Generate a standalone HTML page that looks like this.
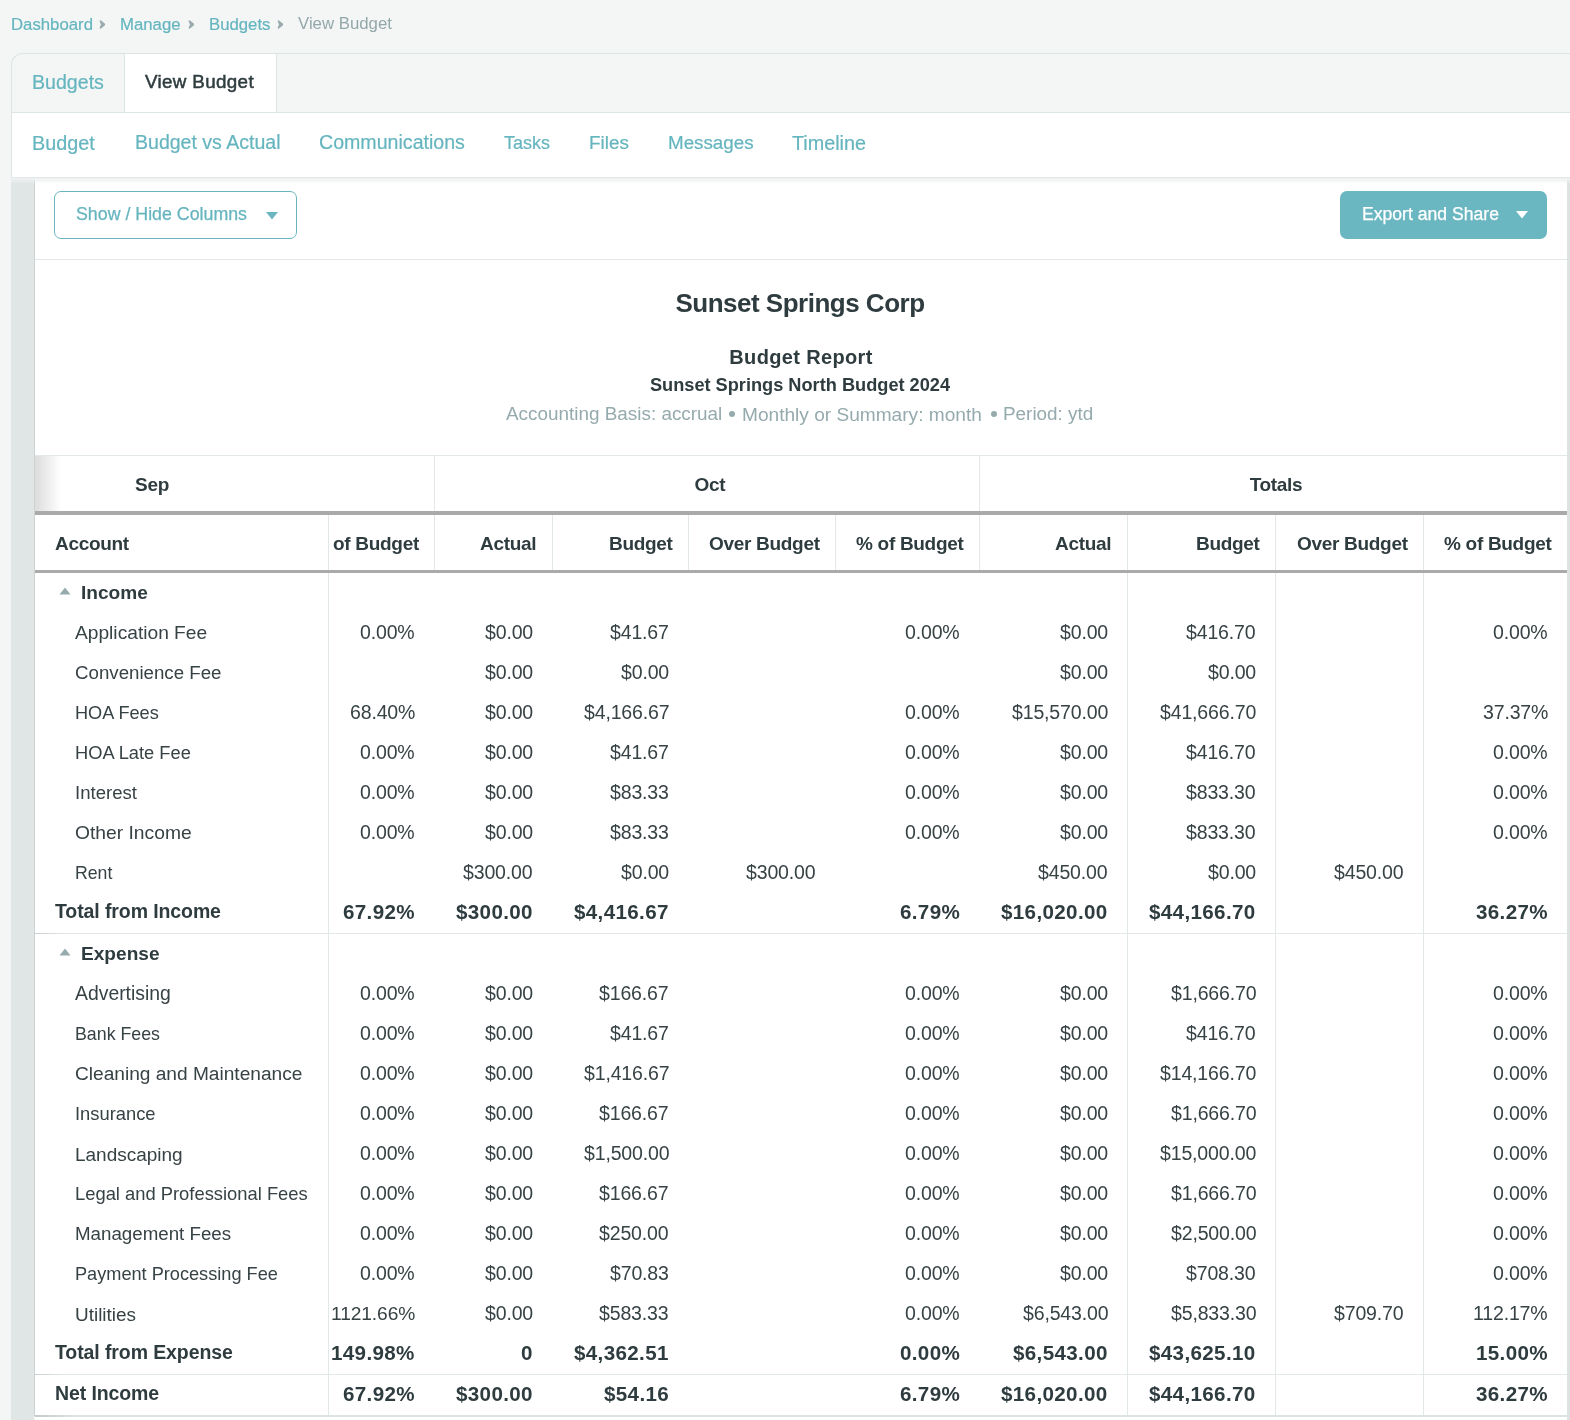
<!DOCTYPE html>
<html><head><meta charset="utf-8"><title>View Budget</title>
<style>
html,body{margin:0;padding:0;}
body{width:1570px;height:1420px;position:relative;overflow:hidden;background:#f4f6f6;font-family:"Liberation Sans",sans-serif;}
.t{position:absolute;white-space:nowrap;will-change:transform;}
.r{position:absolute;}
</style></head><body>
<div class="r" style="left:11px;top:178px;width:23px;height:1242px;background:#e0e6e6;"></div>
<div class="r" style="left:34px;top:178px;width:1px;height:1238px;background:#cdd3d3;"></div>
<div class="r" style="left:1567px;top:178px;width:3px;height:1242px;background:#dde3e3;"></div>
<div class="r" style="left:35px;top:178px;width:1532px;height:1242px;background:#fff;"></div>
<div class="r" style="left:11px;top:53px;width:1570px;height:125px;background:#f4f6f6;border-top:1px solid #dde4e4;border-left:1px solid #dde4e4;border-top-left-radius:12px;box-sizing:border-box;"></div>
<div class="r" style="left:124px;top:53px;width:153px;height:60px;background:#fff;border:1px solid #dde4e4;border-bottom:none;box-sizing:border-box;"></div>
<div class="r" style="left:11px;top:112px;width:1559px;height:1px;background:#dde4e4;"></div>
<div class="r" style="left:12px;top:113px;width:1558px;height:64px;background:#fff;"></div>
<div class="r" style="left:11px;top:177px;width:1559px;height:7px;background:linear-gradient(#dde2e2 0px,#eef1f1 1.5px,rgba(255,255,255,0) 7px);"></div>
<div class="t" style="left:11.30px;top:12.90px;font-size:16.75px;line-height:23px;color:#65b5bf;-webkit-text-stroke:0.2px #65b5bf;">Dashboard</div>
<div class="t" style="left:120.30px;top:12.90px;font-size:16.75px;line-height:23px;color:#65b5bf;-webkit-text-stroke:0.2px #65b5bf;">Manage</div>
<div class="t" style="left:209.00px;top:12.90px;font-size:16.75px;line-height:23px;color:#65b5bf;-webkit-text-stroke:0.2px #65b5bf;">Budgets</div>
<div class="t" style="left:297.50px;top:12.38px;font-size:16.8px;line-height:24px;color:#93a7a9;">View Budget</div>
<svg class="r" style="left:99px;top:19px" width="8" height="11" viewBox="0 0 8 11"><path d="M0.7 2.6 Q0.4 1.1 2.0 1.4 L5.8 4.5 Q6.5 5.5 5.8 6.5 L2.0 9.6 Q0.4 9.9 0.7 8.4 L2.0 5.5 Z" fill="#9aabad"/></svg>
<svg class="r" style="left:188px;top:19px" width="8" height="11" viewBox="0 0 8 11"><path d="M0.7 2.6 Q0.4 1.1 2.0 1.4 L5.8 4.5 Q6.5 5.5 5.8 6.5 L2.0 9.6 Q0.4 9.9 0.7 8.4 L2.0 5.5 Z" fill="#9aabad"/></svg>
<svg class="r" style="left:277px;top:19px" width="8" height="11" viewBox="0 0 8 11"><path d="M0.7 2.6 Q0.4 1.1 2.0 1.4 L5.8 4.5 Q6.5 5.5 5.8 6.5 L2.0 9.6 Q0.4 9.9 0.7 8.4 L2.0 5.5 Z" fill="#9aabad"/></svg>
<div class="t" style="left:31.50px;top:69.01px;font-size:19.6px;line-height:27px;color:#65b5bf;-webkit-text-stroke:0.2px #65b5bf;">Budgets</div>
<div class="t" style="left:145.30px;top:69.49px;font-size:18.8px;line-height:26px;color:#2f3c3f;-webkit-text-stroke:0.5px #2f3c3f;letter-spacing:0.35px;">View Budget</div>
<div class="t" style="left:31.90px;top:128.84px;font-size:19.8px;line-height:28px;color:#65b5bf;-webkit-text-stroke:0.2px #65b5bf;">Budget</div>
<div class="t" style="left:134.70px;top:129.43px;font-size:19.55px;line-height:27px;color:#65b5bf;-webkit-text-stroke:0.2px #65b5bf;">Budget vs Actual</div>
<div class="t" style="left:318.90px;top:129.41px;font-size:19.6px;line-height:27px;color:#65b5bf;-webkit-text-stroke:0.2px #65b5bf;">Communications</div>
<div class="t" style="left:504.40px;top:130.96px;font-size:18.0px;line-height:25px;color:#65b5bf;-webkit-text-stroke:0.2px #65b5bf;">Tasks</div>
<div class="t" style="left:588.60px;top:130.15px;font-size:18.9px;line-height:26px;color:#65b5bf;-webkit-text-stroke:0.2px #65b5bf;">Files</div>
<div class="t" style="left:667.70px;top:130.19px;font-size:18.8px;line-height:26px;color:#65b5bf;-webkit-text-stroke:0.2px #65b5bf;">Messages</div>
<div class="t" style="left:791.90px;top:128.84px;font-size:19.8px;line-height:28px;color:#65b5bf;-webkit-text-stroke:0.2px #65b5bf;">Timeline</div>
<div class="r" style="left:54px;top:191px;width:243px;height:48px;border:1px solid #6ab5bf;border-radius:7px;box-sizing:border-box;"></div>
<div class="t" style="left:75.80px;top:202.33px;font-size:17.8px;line-height:25px;color:#65b5bf;-webkit-text-stroke:0.25px #65b5bf;">Show / Hide Columns</div>
<svg class="r" style="left:266px;top:212px" width="12" height="8" viewBox="0 0 12 8"><path d="M0 0 H12 L6 7.5 Z" fill="#6ab5bf"/></svg>
<div class="r" style="left:1340px;top:191px;width:207px;height:48px;background:#6bb7c1;border-radius:7px;"></div>
<div class="t" style="left:1361.50px;top:202.40px;font-size:17.6px;line-height:25px;color:#fff;-webkit-text-stroke:0.25px #fff;">Export and Share</div>
<svg class="r" style="left:1516px;top:211px" width="12" height="8" viewBox="0 0 12 8"><path d="M0 0 H12 L6 7.5 Z" fill="#fff"/></svg>
<div class="r" style="left:35px;top:259px;width:1532px;height:1px;background:#e2e8e8;"></div>
<div class="t" style="left:500.30px;width:600px;text-align:center;top:285.49px;font-size:26px;line-height:36px;font-weight:bold;color:#2f3c3f;letter-spacing:-0.5px;">Sunset Springs Corp</div>
<div class="t" style="left:500.60px;width:600px;text-align:center;top:342.57px;font-size:20px;line-height:28px;font-weight:bold;color:#2f3c3f;letter-spacing:0.35px;">Budget Report</div>
<div class="t" style="left:500.00px;width:600px;text-align:center;top:373.19px;font-size:18.2px;line-height:25px;font-weight:bold;color:#2f3c3f;">Sunset Springs North Budget 2024</div>
<div class="t" style="left:505.80px;top:401.45px;font-size:18.9px;line-height:26px;color:#95aaad;">Accounting Basis: accrual</div>
<div class="t" style="left:742.00px;top:400.88px;font-size:19.1px;line-height:27px;color:#95aaad;">Monthly or Summary: month</div>
<div class="t" style="left:1003.20px;top:401.45px;font-size:18.9px;line-height:26px;color:#95aaad;">Period: ytd</div>
<div class="r" style="left:728.8px;top:411.1px;width:6px;height:6px;background:#95aaad;border-radius:50%;"></div>
<div class="r" style="left:990.8px;top:411.1px;width:6px;height:6px;background:#95aaad;border-radius:50%;"></div>
<div class="r" style="left:35px;top:455px;width:1532px;height:1px;background:#e2e8e8;"></div>
<div class="r" style="left:35px;top:456px;width:26px;height:55px;background:linear-gradient(90deg,#dcdcdc,rgba(255,255,255,0));"></div>
<div class="r" style="left:35px;top:511px;width:1532px;height:4px;background:#aaaaaa;"></div>
<div class="r" style="left:35px;top:570px;width:1532px;height:3px;background:#aaaaaa;"></div>
<div class="r" style="left:434px;top:456px;width:1px;height:55px;background:#e2e8e8;"></div>
<div class="r" style="left:979px;top:456px;width:1px;height:55px;background:#e2e8e8;"></div>
<div class="r" style="left:328px;top:515px;width:1px;height:55px;background:#e2e8e8;"></div>
<div class="r" style="left:434px;top:515px;width:1px;height:55px;background:#e2e8e8;"></div>
<div class="r" style="left:552px;top:515px;width:1px;height:55px;background:#e2e8e8;"></div>
<div class="r" style="left:688px;top:515px;width:1px;height:55px;background:#e2e8e8;"></div>
<div class="r" style="left:835px;top:515px;width:1px;height:55px;background:#e2e8e8;"></div>
<div class="r" style="left:979px;top:515px;width:1px;height:55px;background:#e2e8e8;"></div>
<div class="r" style="left:1127px;top:515px;width:1px;height:55px;background:#e2e8e8;"></div>
<div class="r" style="left:1275px;top:515px;width:1px;height:55px;background:#e2e8e8;"></div>
<div class="r" style="left:1423px;top:515px;width:1px;height:55px;background:#e2e8e8;"></div>
<div class="r" style="left:328px;top:573px;width:1px;height:842px;background:#e2e8e8;"></div>
<div class="r" style="left:1127px;top:573px;width:1px;height:842px;background:#e2e8e8;"></div>
<div class="r" style="left:1275px;top:573px;width:1px;height:842px;background:#e2e8e8;"></div>
<div class="r" style="left:1423px;top:573px;width:1px;height:842px;background:#e2e8e8;"></div>
<div class="r" style="left:35px;top:933px;width:1532px;height:1px;background:linear-gradient(90deg,#c9cfcf,#e2e8e8 30px);"></div>
<div class="r" style="left:35px;top:1374px;width:1532px;height:1px;background:linear-gradient(90deg,#c9cfcf,#e2e8e8 30px);"></div>
<div class="r" style="left:35px;top:1415px;width:1532px;height:2px;background:linear-gradient(90deg,#c4caca,#dde3e3 40px);"></div>
<div class="t" style="left:-148.00px;width:600px;text-align:center;top:470.72px;font-size:19px;line-height:27px;font-weight:bold;color:#2f3c3f;letter-spacing:-0.3px;">Sep</div>
<div class="t" style="left:409.90px;width:600px;text-align:center;top:470.72px;font-size:19px;line-height:27px;font-weight:bold;color:#2f3c3f;letter-spacing:-0.3px;">Oct</div>
<div class="t" style="left:976.00px;width:600px;text-align:center;top:470.72px;font-size:19px;line-height:27px;font-weight:bold;color:#2f3c3f;letter-spacing:-0.3px;">Totals</div>
<div class="t" style="left:55.00px;top:529.72px;font-size:19px;line-height:27px;font-weight:bold;color:#2f3c3f;letter-spacing:-0.3px;">Account</div>
<div class="t" style="right:1151.40px;text-align:right;top:529.72px;font-size:19px;line-height:27px;font-weight:bold;color:#2f3c3f;letter-spacing:-0.3px;">of Budget</div>
<div class="t" style="right:1033.40px;text-align:right;top:529.72px;font-size:19px;line-height:27px;font-weight:bold;color:#2f3c3f;letter-spacing:-0.3px;">Actual</div>
<div class="t" style="right:897.40px;text-align:right;top:529.72px;font-size:19px;line-height:27px;font-weight:bold;color:#2f3c3f;letter-spacing:-0.3px;">Budget</div>
<div class="t" style="right:750.40px;text-align:right;top:529.72px;font-size:19px;line-height:27px;font-weight:bold;color:#2f3c3f;letter-spacing:-0.3px;">Over Budget</div>
<div class="t" style="right:606.40px;text-align:right;top:529.72px;font-size:19px;line-height:27px;font-weight:bold;color:#2f3c3f;letter-spacing:-0.3px;">% of Budget</div>
<div class="t" style="right:458.40px;text-align:right;top:529.72px;font-size:19px;line-height:27px;font-weight:bold;color:#2f3c3f;letter-spacing:-0.3px;">Actual</div>
<div class="t" style="right:310.40px;text-align:right;top:529.72px;font-size:19px;line-height:27px;font-weight:bold;color:#2f3c3f;letter-spacing:-0.3px;">Budget</div>
<div class="t" style="right:162.40px;text-align:right;top:529.72px;font-size:19px;line-height:27px;font-weight:bold;color:#2f3c3f;letter-spacing:-0.3px;">Over Budget</div>
<div class="t" style="right:18.40px;text-align:right;top:529.72px;font-size:19px;line-height:27px;font-weight:bold;color:#2f3c3f;letter-spacing:-0.3px;">% of Budget</div>
<svg class="r" style="left:58.5px;top:587px" width="12" height="8" viewBox="0 0 12 8"><path d="M6 0.5 L11.5 7.5 H0.5 Z" fill="#97abad"/></svg>
<div class="t" style="left:81.10px;top:578.88px;font-size:19.1px;line-height:27px;font-weight:bold;color:#2f3c3f;">Income</div>
<div class="t" style="left:74.90px;top:619.45px;font-size:19.18px;line-height:27px;color:#374245;">Application Fee</div>
<div class="t" style="right:1155.10px;text-align:right;top:618.74px;font-size:19.5px;line-height:27px;color:#374245;letter-spacing:-0.15px;">0.00%</div>
<div class="t" style="right:1037.10px;text-align:right;top:618.74px;font-size:19.5px;line-height:27px;color:#374245;letter-spacing:-0.15px;">$0.00</div>
<div class="t" style="right:901.10px;text-align:right;top:618.74px;font-size:19.5px;line-height:27px;color:#374245;letter-spacing:-0.15px;">$41.67</div>
<div class="t" style="right:610.10px;text-align:right;top:618.74px;font-size:19.5px;line-height:27px;color:#374245;letter-spacing:-0.15px;">0.00%</div>
<div class="t" style="right:462.10px;text-align:right;top:618.74px;font-size:19.5px;line-height:27px;color:#374245;letter-spacing:-0.15px;">$0.00</div>
<div class="t" style="right:314.10px;text-align:right;top:618.74px;font-size:19.5px;line-height:27px;color:#374245;letter-spacing:-0.15px;">$416.70</div>
<div class="t" style="right:22.10px;text-align:right;top:618.74px;font-size:19.5px;line-height:27px;color:#374245;letter-spacing:-0.15px;">0.00%</div>
<div class="t" style="left:74.90px;top:660.12px;font-size:18.69px;line-height:26px;color:#374245;">Convenience Fee</div>
<div class="t" style="right:1037.10px;text-align:right;top:658.74px;font-size:19.5px;line-height:27px;color:#374245;letter-spacing:-0.15px;">$0.00</div>
<div class="t" style="right:901.10px;text-align:right;top:658.74px;font-size:19.5px;line-height:27px;color:#374245;letter-spacing:-0.15px;">$0.00</div>
<div class="t" style="right:462.10px;text-align:right;top:658.74px;font-size:19.5px;line-height:27px;color:#374245;letter-spacing:-0.15px;">$0.00</div>
<div class="t" style="right:314.10px;text-align:right;top:658.74px;font-size:19.5px;line-height:27px;color:#374245;letter-spacing:-0.15px;">$0.00</div>
<div class="t" style="left:74.90px;top:700.80px;font-size:18.17px;line-height:25px;color:#374245;">HOA Fees</div>
<div class="t" style="right:1155.10px;text-align:right;top:698.74px;font-size:19.5px;line-height:27px;color:#374245;letter-spacing:-0.15px;">68.40%</div>
<div class="t" style="right:1037.10px;text-align:right;top:698.74px;font-size:19.5px;line-height:27px;color:#374245;letter-spacing:-0.15px;">$0.00</div>
<div class="t" style="right:901.10px;text-align:right;top:698.74px;font-size:19.5px;line-height:27px;color:#374245;letter-spacing:-0.15px;">$4,166.67</div>
<div class="t" style="right:610.10px;text-align:right;top:698.74px;font-size:19.5px;line-height:27px;color:#374245;letter-spacing:-0.15px;">0.00%</div>
<div class="t" style="right:462.10px;text-align:right;top:698.74px;font-size:19.5px;line-height:27px;color:#374245;letter-spacing:-0.15px;">$15,570.00</div>
<div class="t" style="right:314.10px;text-align:right;top:698.74px;font-size:19.5px;line-height:27px;color:#374245;letter-spacing:-0.15px;">$41,666.70</div>
<div class="t" style="right:22.10px;text-align:right;top:698.74px;font-size:19.5px;line-height:27px;color:#374245;letter-spacing:-0.15px;">37.37%</div>
<div class="t" style="left:74.90px;top:740.26px;font-size:18.29px;line-height:26px;color:#374245;">HOA Late Fee</div>
<div class="t" style="right:1155.10px;text-align:right;top:738.74px;font-size:19.5px;line-height:27px;color:#374245;letter-spacing:-0.15px;">0.00%</div>
<div class="t" style="right:1037.10px;text-align:right;top:738.74px;font-size:19.5px;line-height:27px;color:#374245;letter-spacing:-0.15px;">$0.00</div>
<div class="t" style="right:901.10px;text-align:right;top:738.74px;font-size:19.5px;line-height:27px;color:#374245;letter-spacing:-0.15px;">$41.67</div>
<div class="t" style="right:610.10px;text-align:right;top:738.74px;font-size:19.5px;line-height:27px;color:#374245;letter-spacing:-0.15px;">0.00%</div>
<div class="t" style="right:462.10px;text-align:right;top:738.74px;font-size:19.5px;line-height:27px;color:#374245;letter-spacing:-0.15px;">$0.00</div>
<div class="t" style="right:314.10px;text-align:right;top:738.74px;font-size:19.5px;line-height:27px;color:#374245;letter-spacing:-0.15px;">$416.70</div>
<div class="t" style="right:22.10px;text-align:right;top:738.74px;font-size:19.5px;line-height:27px;color:#374245;letter-spacing:-0.15px;">0.00%</div>
<div class="t" style="left:74.90px;top:780.16px;font-size:18.59px;line-height:26px;color:#374245;">Interest</div>
<div class="t" style="right:1155.10px;text-align:right;top:778.74px;font-size:19.5px;line-height:27px;color:#374245;letter-spacing:-0.15px;">0.00%</div>
<div class="t" style="right:1037.10px;text-align:right;top:778.74px;font-size:19.5px;line-height:27px;color:#374245;letter-spacing:-0.15px;">$0.00</div>
<div class="t" style="right:901.10px;text-align:right;top:778.74px;font-size:19.5px;line-height:27px;color:#374245;letter-spacing:-0.15px;">$83.33</div>
<div class="t" style="right:610.10px;text-align:right;top:778.74px;font-size:19.5px;line-height:27px;color:#374245;letter-spacing:-0.15px;">0.00%</div>
<div class="t" style="right:462.10px;text-align:right;top:778.74px;font-size:19.5px;line-height:27px;color:#374245;letter-spacing:-0.15px;">$0.00</div>
<div class="t" style="right:314.10px;text-align:right;top:778.74px;font-size:19.5px;line-height:27px;color:#374245;letter-spacing:-0.15px;">$833.30</div>
<div class="t" style="right:22.10px;text-align:right;top:778.74px;font-size:19.5px;line-height:27px;color:#374245;letter-spacing:-0.15px;">0.00%</div>
<div class="t" style="left:74.90px;top:819.43px;font-size:19.25px;line-height:27px;color:#374245;">Other Income</div>
<div class="t" style="right:1155.10px;text-align:right;top:818.74px;font-size:19.5px;line-height:27px;color:#374245;letter-spacing:-0.15px;">0.00%</div>
<div class="t" style="right:1037.10px;text-align:right;top:818.74px;font-size:19.5px;line-height:27px;color:#374245;letter-spacing:-0.15px;">$0.00</div>
<div class="t" style="right:901.10px;text-align:right;top:818.74px;font-size:19.5px;line-height:27px;color:#374245;letter-spacing:-0.15px;">$83.33</div>
<div class="t" style="right:610.10px;text-align:right;top:818.74px;font-size:19.5px;line-height:27px;color:#374245;letter-spacing:-0.15px;">0.00%</div>
<div class="t" style="right:462.10px;text-align:right;top:818.74px;font-size:19.5px;line-height:27px;color:#374245;letter-spacing:-0.15px;">$0.00</div>
<div class="t" style="right:314.10px;text-align:right;top:818.74px;font-size:19.5px;line-height:27px;color:#374245;letter-spacing:-0.15px;">$833.30</div>
<div class="t" style="right:22.10px;text-align:right;top:818.74px;font-size:19.5px;line-height:27px;color:#374245;letter-spacing:-0.15px;">0.00%</div>
<div class="t" style="left:74.90px;top:860.97px;font-size:17.7px;line-height:25px;color:#374245;">Rent</div>
<div class="t" style="right:1037.10px;text-align:right;top:858.74px;font-size:19.5px;line-height:27px;color:#374245;letter-spacing:-0.15px;">$300.00</div>
<div class="t" style="right:901.10px;text-align:right;top:858.74px;font-size:19.5px;line-height:27px;color:#374245;letter-spacing:-0.15px;">$0.00</div>
<div class="t" style="right:754.10px;text-align:right;top:858.74px;font-size:19.5px;line-height:27px;color:#374245;letter-spacing:-0.15px;">$300.00</div>
<div class="t" style="right:462.10px;text-align:right;top:858.74px;font-size:19.5px;line-height:27px;color:#374245;letter-spacing:-0.15px;">$450.00</div>
<div class="t" style="right:314.10px;text-align:right;top:858.74px;font-size:19.5px;line-height:27px;color:#374245;letter-spacing:-0.15px;">$0.00</div>
<div class="t" style="right:166.10px;text-align:right;top:858.74px;font-size:19.5px;line-height:27px;color:#374245;letter-spacing:-0.15px;">$450.00</div>
<div class="t" style="left:55.40px;top:897.74px;font-size:19.5px;line-height:27px;font-weight:bold;color:#2f3c3f;letter-spacing:-0.1px;">Total from Income</div>
<div class="t" style="right:1155.20px;text-align:right;top:896.96px;font-size:20.6px;line-height:29px;font-weight:bold;color:#2f3c3f;letter-spacing:0.35px;">67.92%</div>
<div class="t" style="right:1037.20px;text-align:right;top:896.96px;font-size:20.6px;line-height:29px;font-weight:bold;color:#2f3c3f;letter-spacing:0.35px;">$300.00</div>
<div class="t" style="right:901.20px;text-align:right;top:896.96px;font-size:20.6px;line-height:29px;font-weight:bold;color:#2f3c3f;letter-spacing:0.35px;">$4,416.67</div>
<div class="t" style="right:610.20px;text-align:right;top:896.96px;font-size:20.6px;line-height:29px;font-weight:bold;color:#2f3c3f;letter-spacing:0.35px;">6.79%</div>
<div class="t" style="right:462.20px;text-align:right;top:896.96px;font-size:20.6px;line-height:29px;font-weight:bold;color:#2f3c3f;letter-spacing:0.35px;">$16,020.00</div>
<div class="t" style="right:314.20px;text-align:right;top:896.96px;font-size:20.6px;line-height:29px;font-weight:bold;color:#2f3c3f;letter-spacing:0.35px;">$44,166.70</div>
<div class="t" style="right:22.20px;text-align:right;top:896.96px;font-size:20.6px;line-height:29px;font-weight:bold;color:#2f3c3f;letter-spacing:0.35px;">36.27%</div>
<svg class="r" style="left:58.5px;top:948px" width="12" height="8" viewBox="0 0 12 8"><path d="M6 0.5 L11.5 7.5 H0.5 Z" fill="#97abad"/></svg>
<div class="t" style="left:81.30px;top:939.78px;font-size:19.1px;line-height:27px;font-weight:bold;color:#2f3c3f;">Expense</div>
<div class="t" style="left:74.90px;top:980.38px;font-size:19.39px;line-height:27px;color:#374245;">Advertising</div>
<div class="t" style="right:1155.10px;text-align:right;top:979.74px;font-size:19.5px;line-height:27px;color:#374245;letter-spacing:-0.15px;">0.00%</div>
<div class="t" style="right:1037.10px;text-align:right;top:979.74px;font-size:19.5px;line-height:27px;color:#374245;letter-spacing:-0.15px;">$0.00</div>
<div class="t" style="right:901.10px;text-align:right;top:979.74px;font-size:19.5px;line-height:27px;color:#374245;letter-spacing:-0.15px;">$166.67</div>
<div class="t" style="right:610.10px;text-align:right;top:979.74px;font-size:19.5px;line-height:27px;color:#374245;letter-spacing:-0.15px;">0.00%</div>
<div class="t" style="right:462.10px;text-align:right;top:979.74px;font-size:19.5px;line-height:27px;color:#374245;letter-spacing:-0.15px;">$0.00</div>
<div class="t" style="right:314.10px;text-align:right;top:979.74px;font-size:19.5px;line-height:27px;color:#374245;letter-spacing:-0.15px;">$1,666.70</div>
<div class="t" style="right:22.10px;text-align:right;top:979.74px;font-size:19.5px;line-height:27px;color:#374245;letter-spacing:-0.15px;">0.00%</div>
<div class="t" style="left:74.90px;top:1021.93px;font-size:17.8px;line-height:25px;color:#374245;">Bank Fees</div>
<div class="t" style="right:1155.10px;text-align:right;top:1019.74px;font-size:19.5px;line-height:27px;color:#374245;letter-spacing:-0.15px;">0.00%</div>
<div class="t" style="right:1037.10px;text-align:right;top:1019.74px;font-size:19.5px;line-height:27px;color:#374245;letter-spacing:-0.15px;">$0.00</div>
<div class="t" style="right:901.10px;text-align:right;top:1019.74px;font-size:19.5px;line-height:27px;color:#374245;letter-spacing:-0.15px;">$41.67</div>
<div class="t" style="right:610.10px;text-align:right;top:1019.74px;font-size:19.5px;line-height:27px;color:#374245;letter-spacing:-0.15px;">0.00%</div>
<div class="t" style="right:462.10px;text-align:right;top:1019.74px;font-size:19.5px;line-height:27px;color:#374245;letter-spacing:-0.15px;">$0.00</div>
<div class="t" style="right:314.10px;text-align:right;top:1019.74px;font-size:19.5px;line-height:27px;color:#374245;letter-spacing:-0.15px;">$416.70</div>
<div class="t" style="right:22.10px;text-align:right;top:1019.74px;font-size:19.5px;line-height:27px;color:#374245;letter-spacing:-0.15px;">0.00%</div>
<div class="t" style="left:74.90px;top:1060.47px;font-size:19.12px;line-height:27px;color:#374245;">Cleaning and Maintenance</div>
<div class="t" style="right:1155.10px;text-align:right;top:1059.74px;font-size:19.5px;line-height:27px;color:#374245;letter-spacing:-0.15px;">0.00%</div>
<div class="t" style="right:1037.10px;text-align:right;top:1059.74px;font-size:19.5px;line-height:27px;color:#374245;letter-spacing:-0.15px;">$0.00</div>
<div class="t" style="right:901.10px;text-align:right;top:1059.74px;font-size:19.5px;line-height:27px;color:#374245;letter-spacing:-0.15px;">$1,416.67</div>
<div class="t" style="right:610.10px;text-align:right;top:1059.74px;font-size:19.5px;line-height:27px;color:#374245;letter-spacing:-0.15px;">0.00%</div>
<div class="t" style="right:462.10px;text-align:right;top:1059.74px;font-size:19.5px;line-height:27px;color:#374245;letter-spacing:-0.15px;">$0.00</div>
<div class="t" style="right:314.10px;text-align:right;top:1059.74px;font-size:19.5px;line-height:27px;color:#374245;letter-spacing:-0.15px;">$14,166.70</div>
<div class="t" style="right:22.10px;text-align:right;top:1059.74px;font-size:19.5px;line-height:27px;color:#374245;letter-spacing:-0.15px;">0.00%</div>
<div class="t" style="left:74.90px;top:1101.25px;font-size:18.33px;line-height:26px;color:#374245;">Insurance</div>
<div class="t" style="right:1155.10px;text-align:right;top:1099.74px;font-size:19.5px;line-height:27px;color:#374245;letter-spacing:-0.15px;">0.00%</div>
<div class="t" style="right:1037.10px;text-align:right;top:1099.74px;font-size:19.5px;line-height:27px;color:#374245;letter-spacing:-0.15px;">$0.00</div>
<div class="t" style="right:901.10px;text-align:right;top:1099.74px;font-size:19.5px;line-height:27px;color:#374245;letter-spacing:-0.15px;">$166.67</div>
<div class="t" style="right:610.10px;text-align:right;top:1099.74px;font-size:19.5px;line-height:27px;color:#374245;letter-spacing:-0.15px;">0.00%</div>
<div class="t" style="right:462.10px;text-align:right;top:1099.74px;font-size:19.5px;line-height:27px;color:#374245;letter-spacing:-0.15px;">$0.00</div>
<div class="t" style="right:314.10px;text-align:right;top:1099.74px;font-size:19.5px;line-height:27px;color:#374245;letter-spacing:-0.15px;">$1,666.70</div>
<div class="t" style="right:22.10px;text-align:right;top:1099.74px;font-size:19.5px;line-height:27px;color:#374245;letter-spacing:-0.15px;">0.00%</div>
<div class="t" style="left:74.90px;top:1140.52px;font-size:18.99px;line-height:27px;color:#374245;">Landscaping</div>
<div class="t" style="right:1155.10px;text-align:right;top:1139.74px;font-size:19.5px;line-height:27px;color:#374245;letter-spacing:-0.15px;">0.00%</div>
<div class="t" style="right:1037.10px;text-align:right;top:1139.74px;font-size:19.5px;line-height:27px;color:#374245;letter-spacing:-0.15px;">$0.00</div>
<div class="t" style="right:901.10px;text-align:right;top:1139.74px;font-size:19.5px;line-height:27px;color:#374245;letter-spacing:-0.15px;">$1,500.00</div>
<div class="t" style="right:610.10px;text-align:right;top:1139.74px;font-size:19.5px;line-height:27px;color:#374245;letter-spacing:-0.15px;">0.00%</div>
<div class="t" style="right:462.10px;text-align:right;top:1139.74px;font-size:19.5px;line-height:27px;color:#374245;letter-spacing:-0.15px;">$0.00</div>
<div class="t" style="right:314.10px;text-align:right;top:1139.74px;font-size:19.5px;line-height:27px;color:#374245;letter-spacing:-0.15px;">$15,000.00</div>
<div class="t" style="right:22.10px;text-align:right;top:1139.74px;font-size:19.5px;line-height:27px;color:#374245;letter-spacing:-0.15px;">0.00%</div>
<div class="t" style="left:74.90px;top:1181.23px;font-size:18.38px;line-height:26px;color:#374245;">Legal and Professional Fees</div>
<div class="t" style="right:1155.10px;text-align:right;top:1179.74px;font-size:19.5px;line-height:27px;color:#374245;letter-spacing:-0.15px;">0.00%</div>
<div class="t" style="right:1037.10px;text-align:right;top:1179.74px;font-size:19.5px;line-height:27px;color:#374245;letter-spacing:-0.15px;">$0.00</div>
<div class="t" style="right:901.10px;text-align:right;top:1179.74px;font-size:19.5px;line-height:27px;color:#374245;letter-spacing:-0.15px;">$166.67</div>
<div class="t" style="right:610.10px;text-align:right;top:1179.74px;font-size:19.5px;line-height:27px;color:#374245;letter-spacing:-0.15px;">0.00%</div>
<div class="t" style="right:462.10px;text-align:right;top:1179.74px;font-size:19.5px;line-height:27px;color:#374245;letter-spacing:-0.15px;">$0.00</div>
<div class="t" style="right:314.10px;text-align:right;top:1179.74px;font-size:19.5px;line-height:27px;color:#374245;letter-spacing:-0.15px;">$1,666.70</div>
<div class="t" style="right:22.10px;text-align:right;top:1179.74px;font-size:19.5px;line-height:27px;color:#374245;letter-spacing:-0.15px;">0.00%</div>
<div class="t" style="left:74.90px;top:1221.11px;font-size:18.73px;line-height:26px;color:#374245;">Management Fees</div>
<div class="t" style="right:1155.10px;text-align:right;top:1219.74px;font-size:19.5px;line-height:27px;color:#374245;letter-spacing:-0.15px;">0.00%</div>
<div class="t" style="right:1037.10px;text-align:right;top:1219.74px;font-size:19.5px;line-height:27px;color:#374245;letter-spacing:-0.15px;">$0.00</div>
<div class="t" style="right:901.10px;text-align:right;top:1219.74px;font-size:19.5px;line-height:27px;color:#374245;letter-spacing:-0.15px;">$250.00</div>
<div class="t" style="right:610.10px;text-align:right;top:1219.74px;font-size:19.5px;line-height:27px;color:#374245;letter-spacing:-0.15px;">0.00%</div>
<div class="t" style="right:462.10px;text-align:right;top:1219.74px;font-size:19.5px;line-height:27px;color:#374245;letter-spacing:-0.15px;">$0.00</div>
<div class="t" style="right:314.10px;text-align:right;top:1219.74px;font-size:19.5px;line-height:27px;color:#374245;letter-spacing:-0.15px;">$2,500.00</div>
<div class="t" style="right:22.10px;text-align:right;top:1219.74px;font-size:19.5px;line-height:27px;color:#374245;letter-spacing:-0.15px;">0.00%</div>
<div class="t" style="left:74.90px;top:1261.81px;font-size:18.16px;line-height:25px;color:#374245;">Payment Processing Fee</div>
<div class="t" style="right:1155.10px;text-align:right;top:1259.74px;font-size:19.5px;line-height:27px;color:#374245;letter-spacing:-0.15px;">0.00%</div>
<div class="t" style="right:1037.10px;text-align:right;top:1259.74px;font-size:19.5px;line-height:27px;color:#374245;letter-spacing:-0.15px;">$0.00</div>
<div class="t" style="right:901.10px;text-align:right;top:1259.74px;font-size:19.5px;line-height:27px;color:#374245;letter-spacing:-0.15px;">$70.83</div>
<div class="t" style="right:610.10px;text-align:right;top:1259.74px;font-size:19.5px;line-height:27px;color:#374245;letter-spacing:-0.15px;">0.00%</div>
<div class="t" style="right:462.10px;text-align:right;top:1259.74px;font-size:19.5px;line-height:27px;color:#374245;letter-spacing:-0.15px;">$0.00</div>
<div class="t" style="right:314.10px;text-align:right;top:1259.74px;font-size:19.5px;line-height:27px;color:#374245;letter-spacing:-0.15px;">$708.30</div>
<div class="t" style="right:22.10px;text-align:right;top:1259.74px;font-size:19.5px;line-height:27px;color:#374245;letter-spacing:-0.15px;">0.00%</div>
<div class="t" style="left:74.90px;top:1300.54px;font-size:18.93px;line-height:27px;color:#374245;">Utilities</div>
<div class="t" style="right:1155.30px;text-align:right;top:1299.85px;font-size:19.2px;line-height:27px;color:#374245;letter-spacing:-0.1px;">1121.66%</div>
<div class="t" style="right:1037.10px;text-align:right;top:1299.74px;font-size:19.5px;line-height:27px;color:#374245;letter-spacing:-0.15px;">$0.00</div>
<div class="t" style="right:901.10px;text-align:right;top:1299.74px;font-size:19.5px;line-height:27px;color:#374245;letter-spacing:-0.15px;">$583.33</div>
<div class="t" style="right:610.10px;text-align:right;top:1299.74px;font-size:19.5px;line-height:27px;color:#374245;letter-spacing:-0.15px;">0.00%</div>
<div class="t" style="right:462.10px;text-align:right;top:1299.74px;font-size:19.5px;line-height:27px;color:#374245;letter-spacing:-0.15px;">$6,543.00</div>
<div class="t" style="right:314.10px;text-align:right;top:1299.74px;font-size:19.5px;line-height:27px;color:#374245;letter-spacing:-0.15px;">$5,833.30</div>
<div class="t" style="right:166.10px;text-align:right;top:1299.74px;font-size:19.5px;line-height:27px;color:#374245;letter-spacing:-0.15px;">$709.70</div>
<div class="t" style="right:22.10px;text-align:right;top:1299.74px;font-size:19.5px;line-height:27px;color:#374245;letter-spacing:-0.15px;">112.17%</div>
<div class="t" style="left:55.40px;top:1339.24px;font-size:19.5px;line-height:27px;font-weight:bold;color:#2f3c3f;letter-spacing:-0.1px;">Total from Expense</div>
<div class="t" style="right:1155.20px;text-align:right;top:1338.46px;font-size:20.6px;line-height:29px;font-weight:bold;color:#2f3c3f;letter-spacing:0.35px;">149.98%</div>
<div class="t" style="right:1037.20px;text-align:right;top:1338.46px;font-size:20.6px;line-height:29px;font-weight:bold;color:#2f3c3f;letter-spacing:0.35px;">0</div>
<div class="t" style="right:901.20px;text-align:right;top:1338.46px;font-size:20.6px;line-height:29px;font-weight:bold;color:#2f3c3f;letter-spacing:0.35px;">$4,362.51</div>
<div class="t" style="right:610.20px;text-align:right;top:1338.46px;font-size:20.6px;line-height:29px;font-weight:bold;color:#2f3c3f;letter-spacing:0.35px;">0.00%</div>
<div class="t" style="right:462.20px;text-align:right;top:1338.46px;font-size:20.6px;line-height:29px;font-weight:bold;color:#2f3c3f;letter-spacing:0.35px;">$6,543.00</div>
<div class="t" style="right:314.20px;text-align:right;top:1338.46px;font-size:20.6px;line-height:29px;font-weight:bold;color:#2f3c3f;letter-spacing:0.35px;">$43,625.10</div>
<div class="t" style="right:22.20px;text-align:right;top:1338.46px;font-size:20.6px;line-height:29px;font-weight:bold;color:#2f3c3f;letter-spacing:0.35px;">15.00%</div>
<div class="t" style="left:55.40px;top:1380.24px;font-size:19.5px;line-height:27px;font-weight:bold;color:#2f3c3f;letter-spacing:-0.1px;">Net Income</div>
<div class="t" style="right:1155.20px;text-align:right;top:1379.46px;font-size:20.6px;line-height:29px;font-weight:bold;color:#2f3c3f;letter-spacing:0.35px;">67.92%</div>
<div class="t" style="right:1037.20px;text-align:right;top:1379.46px;font-size:20.6px;line-height:29px;font-weight:bold;color:#2f3c3f;letter-spacing:0.35px;">$300.00</div>
<div class="t" style="right:901.20px;text-align:right;top:1379.46px;font-size:20.6px;line-height:29px;font-weight:bold;color:#2f3c3f;letter-spacing:0.35px;">$54.16</div>
<div class="t" style="right:610.20px;text-align:right;top:1379.46px;font-size:20.6px;line-height:29px;font-weight:bold;color:#2f3c3f;letter-spacing:0.35px;">6.79%</div>
<div class="t" style="right:462.20px;text-align:right;top:1379.46px;font-size:20.6px;line-height:29px;font-weight:bold;color:#2f3c3f;letter-spacing:0.35px;">$16,020.00</div>
<div class="t" style="right:314.20px;text-align:right;top:1379.46px;font-size:20.6px;line-height:29px;font-weight:bold;color:#2f3c3f;letter-spacing:0.35px;">$44,166.70</div>
<div class="t" style="right:22.20px;text-align:right;top:1379.46px;font-size:20.6px;line-height:29px;font-weight:bold;color:#2f3c3f;letter-spacing:0.35px;">36.27%</div>
</body></html>
